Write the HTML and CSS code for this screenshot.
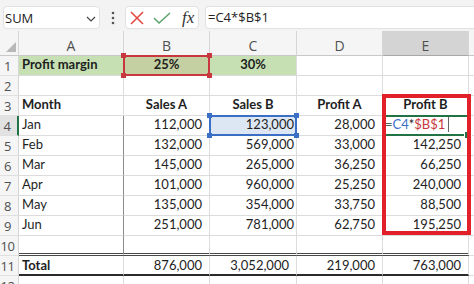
FILE: index.html
```html
<!DOCTYPE html>
<html lang="en">
<head>
    <meta charset="UTF-8">
    <meta name="viewport" content="width=device-width, initial-scale=1.0">
    <title>Profit margin</title>
    <link rel="stylesheet" href="styles.css">
</head>
<body>
    <div class="window">
        <div class="formula-bar">
            <div class="name-box">
                <span>SUM</span>
                <svg class="chevron" width="10" height="6" viewBox="0 0 10 6"><polyline points="1,1 5,5 9,1" fill="none" stroke="#444" stroke-width="1.2"/></svg>
            </div>
            <div class="grip">
                <svg width="4" height="14" viewBox="0 0 4 14"><circle cx="2" cy="2" r="1.3" fill="#555"/><circle cx="2" cy="7" r="1.3" fill="#555"/><circle cx="2" cy="12" r="1.3" fill="#555"/></svg>
            </div>
            <div class="fn-buttons">
                <svg class="cancel" width="14" height="14" viewBox="0 0 14 14"><path d="M1 1 L13 13 M13 1 L1 13" stroke="#e2453f" stroke-width="1.5" fill="none"/></svg>
                <svg class="enter" width="18" height="12" viewBox="0 0 18 12"><path d="M1 6 L6 11 L17 1" stroke="#5ea56c" stroke-width="1.5" fill="none"/></svg>
                <span class="fx">fx</span>
            </div>
            <div class="formula-input">=C4*$B$1</div>
        </div>

        <div class="sheet">
            <!-- column headers -->
            <div class="corner"></div>
            <div class="ch">A</div>
            <div class="ch">B</div>
            <div class="ch">C</div>
            <div class="ch">D</div>
            <div class="ch sel">E</div>
            <div class="ch"></div>

            <!-- row 1 -->
            <div class="rh">1</div>
            <div class="c b green">Profit margin</div>
            <div class="c b mid ref ref-red">25%</div>
            <div class="c b mid green">30%</div>
            <div class="c"></div>
            <div class="c"></div>
            <div class="c"></div>

            <!-- row 2 -->
            <div class="rh">2</div>
            <div class="c"></div>
            <div class="c"></div>
            <div class="c"></div>
            <div class="c"></div>
            <div class="c"></div>
            <div class="c"></div>

            <!-- row 3 -->
            <div class="rh">3</div>
            <div class="c b">Month</div>
            <div class="c b mid">Sales A</div>
            <div class="c b mid">Sales B</div>
            <div class="c b mid">Profit A</div>
            <div class="c b mid">Profit B</div>
            <div class="c"></div>

            <!-- row 4 -->
            <div class="rh sel">4</div>
            <div class="c divider">Jan</div>
            <div class="c num">112,000</div>
            <div class="c num tight ref ref-blue">123,000</div>
            <div class="c num">28,000</div>
            <div class="c active"><span class="t-eq">=</span><span class="t-blue">C4</span>*<span class="t-red">$B$1</span><span class="caret"></span></div>
            <div class="c"></div>

            <!-- row 5 -->
            <div class="rh">5</div>
            <div class="c divider">Feb</div>
            <div class="c num">132,000</div>
            <div class="c num tight">569,000</div>
            <div class="c num">33,000</div>
            <div class="c num">142,250</div>
            <div class="c"></div>

            <!-- row 6 -->
            <div class="rh">6</div>
            <div class="c divider">Mar</div>
            <div class="c num">145,000</div>
            <div class="c num tight">265,000</div>
            <div class="c num">36,250</div>
            <div class="c num">66,250</div>
            <div class="c"></div>

            <!-- row 7 -->
            <div class="rh">7</div>
            <div class="c divider">Apr</div>
            <div class="c num">101,000</div>
            <div class="c num tight">960,000</div>
            <div class="c num">25,250</div>
            <div class="c num">240,000</div>
            <div class="c"></div>

            <!-- row 8 -->
            <div class="rh">8</div>
            <div class="c divider">May</div>
            <div class="c num">135,000</div>
            <div class="c num tight">354,000</div>
            <div class="c num">33,750</div>
            <div class="c num">88,500</div>
            <div class="c"></div>

            <!-- row 9 -->
            <div class="rh">9</div>
            <div class="c divider">Jun</div>
            <div class="c num">251,000</div>
            <div class="c num tight">781,000</div>
            <div class="c num">62,750</div>
            <div class="c num">195,250</div>
            <div class="c"></div>

            <!-- row 10 -->
            <div class="rh">10</div>
            <div class="c divider over-total"></div>
            <div class="c over-total"></div>
            <div class="c over-total"></div>
            <div class="c over-total"></div>
            <div class="c over-total"></div>
            <div class="c"></div>

            <!-- row 11 -->
            <div class="rh">11</div>
            <div class="c b total">Total</div>
            <div class="c num total">876,000</div>
            <div class="c num total">3,052,000</div>
            <div class="c num total">219,000</div>
            <div class="c num total">763,000</div>
            <div class="c"></div>

            <!-- row 12 -->
            <div class="rh">12</div>
            <div class="c"></div>
            <div class="c"></div>
            <div class="c"></div>
            <div class="c"></div>
            <div class="c"></div>
            <div class="c"></div>

            <div class="callout"></div>
        </div>
    </div>
</body>
</html>
```

FILE: styles.css
```css
* {
    box-sizing: border-box;
}

body {
    margin: 0;
    background-color: #fff;
    font-family: Lato, "Liberation Sans", sans-serif;
}

.window {
    width: 474px;
    height: 284px;
    overflow: hidden;
}

/* formula bar */
.formula-bar {
    display: flex;
    align-items: flex-start;
    height: 31px;
    padding: 6px 0 0 3px;
    background-color: #f3f3f3;
    font-family: "Open Sans", sans-serif;
    font-size: 13px;
    color: #222;
}

.name-box {
    display: flex;
    align-items: center;
    justify-content: space-between;
    width: 97px;
    height: 23px;
    padding: 0 3px 0 1px;
    background-color: #fff;
    border: 1px solid #e2e2e2;
    border-radius: 4px;
}

.chevron {
    margin-top: 2px;
}

.grip {
    display: flex;
    justify-content: center;
    width: 25px;
    padding-top: 5px;
}

.fn-buttons {
    display: flex;
    align-items: center;
    width: 74px;
    height: 23px;
    padding-left: 4px;
    background-color: #fff;
    border: 1px solid #e2e2e2;
    border-radius: 4px;
}

.enter {
    margin-left: 9px;
}

.fx {
    margin-left: 11px;
    font-family: "Liberation Serif", serif;
    font-style: italic;
    font-size: 17px;
    color: #333;
}

.formula-input {
    flex: 1;
    height: 23px;
    margin-left: 6px;
    padding-left: 2px;
    line-height: 21px;
    background-color: #fff;
    border: 1px solid #e2e2e2;
    border-right: none;
    border-radius: 4px 0 0 4px;
}

/* grid */
.sheet {
    position: relative;
    display: grid;
    grid-template-columns: 19px 105px 86px 87px 86px 86px 30px;
    grid-template-rows: 25px repeat(12, 20px);
}

.corner {
    position: relative;
    background-color: #f5f5f5;
    border-right: 1px solid #d5d5d5;
    border-bottom: 1px solid #c8c8c8;
}

.corner::after {
    content: "";
    position: absolute;
    right: 2px;
    bottom: 3px;
    width: 10px;
    height: 10px;
    background-color: #b8b8b8;
    clip-path: polygon(100% 0, 100% 100%, 0 100%);
}

.ch {
    padding-top: 5px;
    line-height: 20px;
    text-align: center;
    font-family: "Open Sans", sans-serif;
    font-size: 14px;
    color: #505050;
    background-color: #f5f5f5;
    border-right: 1px solid #d5d5d5;
    border-bottom: 1px solid #c8c8c8;
}

.ch.sel {
    background-color: #d4d4d4;
    border-bottom-color: #a8a8a8;
}

.rh {
    display: flex;
    justify-content: center;
    align-items: center;
    padding-right: 3px;
    white-space: nowrap;
    font-family: "Open Sans", sans-serif;
    font-size: 13px;
    letter-spacing: -0.5px;
    color: #505050;
    background-color: #f5f5f5;
    border-right: 1px solid #d5d5d5;
    border-bottom: 1px solid #e0e0e0;
}

.rh.sel {
    background-color: #e2e2e2;
    border-right: 2px solid #217346;
}

.c {
    padding: 0 3px;
    line-height: 17px;
    font-size: 13px;
    color: #1e1e1e;
    white-space: nowrap;
    border-right: 1px solid #dcdcdc;
    border-bottom: 1px solid #dcdcdc;
}

.b {
    font-weight: 700;
}

.mid {
    text-align: center;
}

.num {
    text-align: right;
    padding-right: 7px;
}

.num.tight {
    padding-right: 2px;
}

.green {
    background-color: #c6e0b4;
}

.divider {
    border-right-color: #8c8c8c;
}

.over-total {
    border-bottom: 3px double #4a4a4a;
}

.total {
    line-height: 18px;
    border-bottom: 2px solid #2a2a2a;
}

/* formula reference boxes */
.ref {
    position: relative;
}

.ref-red {
    --ref: #c8373d;
    background-color: #c4cfa2;
}

.ref-blue {
    --ref: #3b6fc6;
    background-color: #dde7f4;
}

.ref::before {
    content: "";
    position: absolute;
    top: -1px;
    left: -1px;
    right: -1px;
    bottom: -1px;
    border: 2px solid var(--ref);
}

.ref::after {
    content: "";
    position: absolute;
    top: -3px;
    left: -3px;
    right: -3px;
    bottom: -3px;
    background:
        linear-gradient(var(--ref), var(--ref)) 0 0 / 5px 5px no-repeat,
        linear-gradient(var(--ref), var(--ref)) 100% 0 / 5px 5px no-repeat,
        linear-gradient(var(--ref), var(--ref)) 0 100% / 5px 5px no-repeat,
        linear-gradient(var(--ref), var(--ref)) 100% 100% / 5px 5px no-repeat;
}

/* cell being edited */
.active {
    position: relative;
    padding-left: 2px;
}

.active::before {
    content: "";
    position: absolute;
    top: -1px;
    left: -1px;
    right: -1px;
    bottom: -1px;
    border: 2px solid #217346;
}

.active::after {
    content: "";
    position: absolute;
    right: -4px;
    bottom: -4px;
    width: 6px;
    height: 6px;
    background-color: #217346;
    border: 1px solid #fff;
}

.t-eq {
    color: #3d5f55;
}

.t-blue {
    color: #3b6fc6;
}

.t-red {
    color: #c8373d;
}

.caret {
    display: inline-block;
    width: 1px;
    height: 15px;
    margin-left: 3px;
    vertical-align: -3px;
    background-color: #666;
}

/* annotation drawn over column E */
.callout {
    position: absolute;
    left: 382px;
    top: 63px;
    width: 89px;
    height: 141px;
    border: 4px solid #e2202a;
    z-index: 2;
}
```
